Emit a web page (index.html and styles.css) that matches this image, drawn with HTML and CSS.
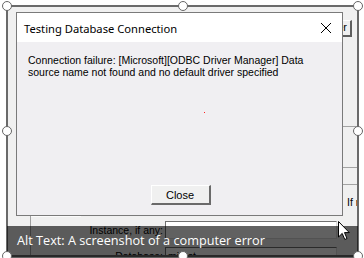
FILE: index.html
```html
<!DOCTYPE html>
<html>
<head>
<meta charset="utf-8">
<link rel="stylesheet" href="styles.css">
</head>
<body>
<div class="frame">
  <div class="bgwin">
    <div class="row-top"><div class="btn-builder">Builder</div></div>
    <div class="rl rl1"></div>
    <div class="rl rl2"></div>
    <div class="rl rl3"></div>
    <div class="ifreq">If required</div>
    <div class="group">
      <div class="field"><span class="lbl">Instance, if any:</span><span class="tb"></span></div>
      <div class="field"><span class="lbl">Database:</span><span class="tb">mitest</span></div>
    </div>
  </div>

  <div class="dialog">
    <div class="titlebar">
      <span class="title">Testing Database Connection</span>
      <svg class="xicon" width="12" height="12" viewBox="0 0 12 12"><path d="M1 1 L11 11 M11 1 L1 11" stroke="#000" stroke-width="1" fill="none"/></svg>
    </div>
    <div class="dbody">
      <p class="msg">Connection failure: [Microsoft][ODBC Driver Manager] Data source name not found and no default driver specified</p>
      <span class="reddot"></span>
      <div class="btnrow"><button class="closebtn">Close</button></div>
    </div>
  </div>

  <div class="alt">Alt Text: A screenshot of a computer error</div>

  <svg class="cursor" width="13" height="20" viewBox="0 0 13 20"><path d="M0.5 0.5 L0.5 16 L4.2 12.4 L6.8 18.5 L9 17.5 L6.5 11.6 L11.3 11.6 Z" fill="#fff" stroke="#000" stroke-width="1" stroke-linejoin="miter"/></svg>

  <span class="h h-tl"></span>
  <span class="h h-tm"></span>
  <span class="h h-tr"></span>
  <span class="h h-ml"></span>
  <span class="h h-mr"></span>
  <span class="h h-bl"></span>
  <span class="h h-bm"></span>
  <span class="h h-br"></span>
</div>
</body>
</html>
```

FILE: styles.css
```css
html, body {
  margin: 0;
  padding: 0;
  background: #ffffff;
  width: 364px;
  height: 258px;
  overflow: hidden;
}

.frame {
  position: relative;
  margin: 5px 0 0 6px;
  width: 349px;
  height: 248px;
  border: 2px solid #6a6a6a;
  background: #f0f0f0;
}

.bgwin {
  width: 100%;
  height: 100%;
  overflow: hidden;
  display: flex;
  flex-direction: column;
  font-family: "Liberation Sans", Arial, sans-serif;
  font-size: 10.5px;
  color: #000;
}

.row-top {
  display: flex;
  justify-content: flex-end;
  padding: 13px 5px 0 0;
}

.btn-builder {
  width: 56px;
  height: 17px;
  box-sizing: border-box;
  border-top: 1px solid #fff;
  border-left: 1px solid #fff;
  border-right: 2px solid #5e5e5e;
  border-bottom: 2px solid #5e5e5e;
  text-align: right;
  padding-right: 3px;
  line-height: 13px;
  font-size: 11px;
}

.rl {
  margin-left: 300px;
  height: 0;
  border-top: 1px solid #a3a3a3;
}
.rl1 { margin-top: 89px; }
.rl2 { margin-top: 40px; }
.rl3 { margin-top: 16px; }

.ifreq {
  margin: 11px 0 0 339px;
  white-space: nowrap;
  line-height: 13px;
  font-size: 10.5px;
}

.group {
  margin: 6px 0 0 22px;
  padding-top: 6px;
  border-left: 1px solid #a0a0a0;
  position: relative;
  display: flex;
  flex-direction: column;
  gap: 8px;
}
.group::before {
  content: "";
  position: absolute;
  left: 0;
  top: 0;
  width: 50px;
  height: 2px;
  background: #fbfbfb;
}

.field {
  display: flex;
  align-items: center;
}
.lbl {
  width: 132px;
  padding-right: 2px;
  text-align: right;
  white-space: nowrap;
}
.tb {
  width: 172px;
  height: 18px;
  box-sizing: border-box;
  border: 1px solid #6f6f6f;
  border-right-color: #d8d8d8;
  border-bottom-color: #d8d8d8;
  background: #fff;
  padding: 2px 2px;
  line-height: 12px;
}

/* dialog */
.dialog {
  position: absolute;
  left: 8px;
  top: 5px;
  width: 327px;
  height: 204px;
  box-sizing: border-box;
  border: 1px solid #7a7a7a;
  background: #f0eff2;
  display: flex;
  flex-direction: column;
}
.titlebar {
  height: 29px;
  background: #ffffff;
  display: flex;
  align-items: center;
  justify-content: space-between;
  padding: 0 10px 0 7px;
}
.title {
  font-family: "Noto Sans", "Open Sans", sans-serif;
  font-size: 11.2px;
  color: #000;
  padding-top: 1px;
}
.xicon {
  display: block;
  margin-top: 1px;
}
.dbody {
  flex: 1;
  display: flex;
  flex-direction: column;
  padding: 12px 12px 10px 11px;
  position: relative;
}
.msg {
  margin: 0;
  font-family: "Liberation Sans", Arial, sans-serif;
  font-size: 10.5px;
  line-height: 12px;
  color: #000;
}
.reddot {
  position: absolute;
  left: 187px;
  top: 70px;
  width: 1px;
  height: 1px;
  background: #ff2020;
}
.btnrow {
  margin-top: auto;
  display: flex;
  justify-content: center;
  padding-left: 3px;
}
.closebtn {
  width: 60px;
  height: 20px;
  box-sizing: border-box;
  margin: 0;
  padding: 0;
  background: #f0f0f0;
  border-top: 1px solid #ffffff;
  border-left: 1px solid #ffffff;
  border-right: 2px solid #6a6a6a;
  border-bottom: 2px solid #6a6a6a;
  font-family: "Liberation Sans", Arial, sans-serif;
  font-size: 11px;
  color: #000;
}

/* alt text overlay */
.alt {
  position: absolute;
  left: -1px;
  right: -1px;
  top: 219px;
  bottom: -4px;
  background: rgba(0, 0, 0, 0.62);
  color: #ffffff;
  font-family: "Open Sans", "Noto Sans", sans-serif;
  font-size: 12.7px;
  line-height: 16px;
  padding: 6px 0 0 10px;
  white-space: nowrap;
}

.cursor {
  position: absolute;
  left: 330px;
  top: 214px;
}

/* selection handles */
.h {
  position: absolute;
  width: 10px;
  height: 10px;
  box-sizing: border-box;
  border: 1.5px solid #666666;
  border-radius: 50%;
  background: #ffffff;
  transform: translate(-50%, -50%);
}
.h-tl { left: -1px; top: -1px; }
.h-tm { left: 50%; top: -1px; }
.h-tr { left: calc(100% + 1px); top: -1px; }
.h-ml { left: -1px; top: 50%; }
.h-mr { left: calc(100% + 1px); top: 50%; }
.h-bl { left: -1px; top: calc(100% + 1px); }
.h-bm { left: 50%; top: calc(100% + 1px); }
.h-br { left: calc(100% + 1px); top: calc(100% + 1px); }
```
